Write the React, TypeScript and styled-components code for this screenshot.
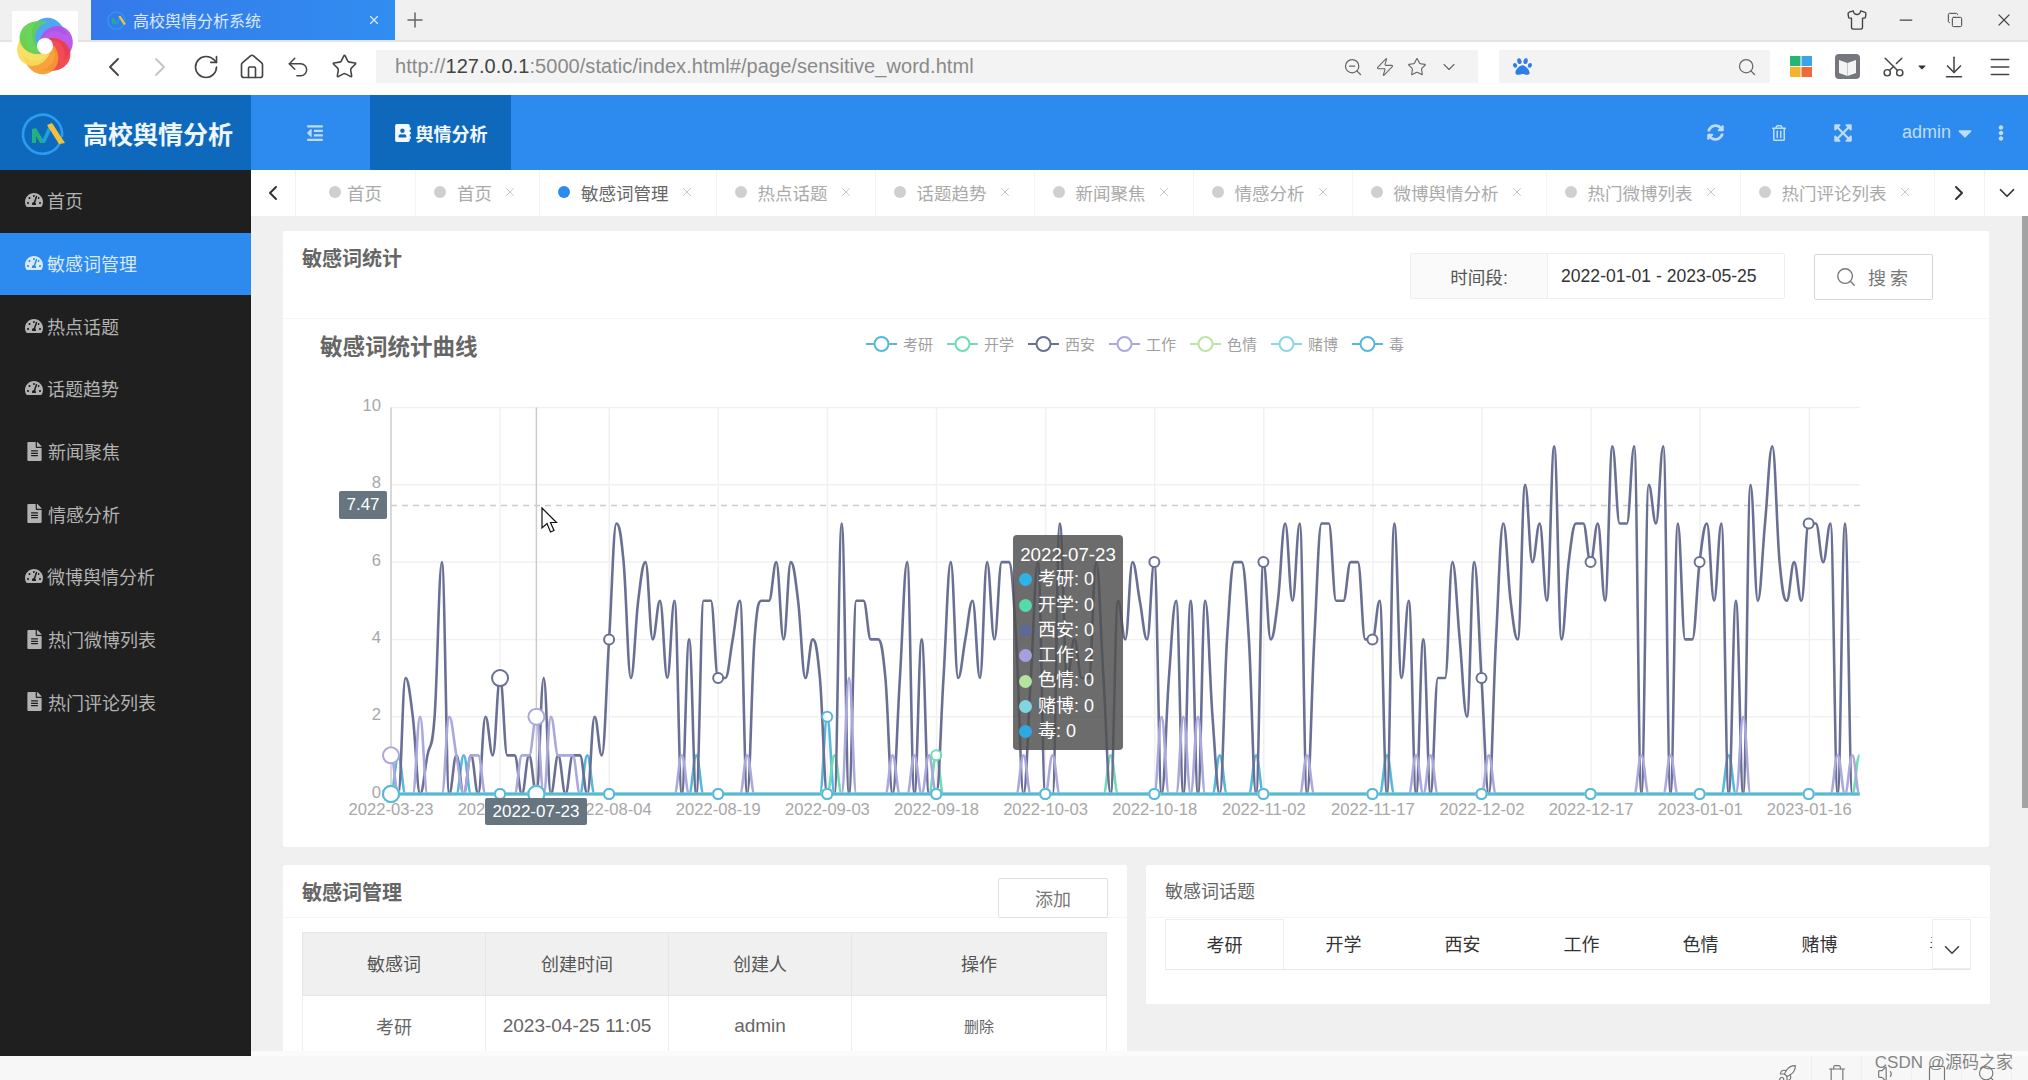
import React from 'react';
import styled, { createGlobalStyle } from 'styled-components';
import {
  ChevronLeft, ChevronRight, ChevronDown, RotateCw, Home, Undo2, Star, ZoomOut, Zap, Search, Scissors,
  ArrowDownToLine, Menu, Shirt, Minus, Copy, X, Plus, Rocket, Trash, Volume1, Square,
} from 'lucide-react';
import {
  FaTachometerAlt, FaFileAlt, FaSyncAlt, FaRegTrashAlt, FaExpandArrowsAlt, FaEllipsisV, FaCaretDown,
  FaOutdent, FaAddressBook, FaPaw,
} from 'react-icons/fa';

const Global = createGlobalStyle`
  html, body { margin: 0; padding: 0; background: #fff; }
  body { font-family: "Liberation Sans", "Noto Sans CJK SC", sans-serif; }
`;

const Page = styled.div`
  width: 2028px;
  height: 1080px;
  display: flex;
  flex-direction: column;
  overflow: hidden;
  position: relative;
`;

/* browser chrome */
const BrowserTabs = styled.div`
  height: 40px;
  background: #f0f0f0;
  display: flex;
  align-items: stretch;
  padding-left: 91px;
  flex: none;
`;
const BrowserTab = styled.div`
  width: 304px;
  background: linear-gradient(90deg, #3579ea, #318df0);
  color: #dce9fb;
  font-size: 16px;
  display: flex;
  align-items: center;
  padding: 0 14px 0 16px;
  gap: 6px;
  box-sizing: border-box;
`;
const TabTitle = styled.span`
  flex: 1;
`;
const NewTab = styled.div`
  width: 40px;
  display: flex;
  align-items: center;
  justify-content: center;
  color: #666;
`;
const WindowControls = styled.div`
  margin-left: auto;
  display: flex;
  align-items: center;
`;
const WindowButton = styled.div`
  width: 49px;
  display: flex;
  justify-content: center;
  color: #444;
`;
const SwirlBox = styled.div`
  position: absolute;
  left: 12px;
  top: 11px;
  width: 66px;
  height: 69px;
  background: #fff;
  display: flex;
  align-items: center;
  justify-content: center;
`;
const BrowserToolbar = styled.div`
  height: 55px;
  background: #fff;
  border-top: 2px solid #e4e4e4;
  box-sizing: border-box;
  display: flex;
  align-items: center;
  padding: 0 0 4px 91px;
  flex: none;
`;
const ToolButton = styled.div<{ $faint?: boolean }>`
  width: 46px;
  display: flex;
  justify-content: center;
  color: ${p => (p.$faint ? '#c4c4c4' : '#444')};
`;
const UprightScissors = styled(Scissors)`
  transform: rotate(-90deg);
`;
const AddressBar = styled.div`
  width: 1102px;
  height: 33px;
  margin-left: 9px;
  background: #f3f3f3;
  display: flex;
  align-items: center;
  padding: 0 13px 0 19px;
  box-sizing: border-box;
  font-size: 20px;
  letter-spacing: 0.06px;
  color: #8a8a8a;
`;
const Host = styled.span`
  color: #444;
`;
const AddressTools = styled.div`
  margin-left: auto;
  display: flex;
  color: #666;
`;
const AddressTool = styled.div`
  width: 32px;
  display: flex;
  justify-content: center;
`;
const SearchBox = styled.div`
  width: 271px;
  height: 33px;
  margin: 0 8px 0 21px;
  background: #f3f3f3;
  display: flex;
  align-items: center;
  justify-content: space-between;
  padding: 0 13px 0 14px;
  box-sizing: border-box;
  color: #666;
`;
const Paw = styled.div`
  color: #2f7de8;
  display: flex;
`;
const CaretCell = styled.div`
  width: 15px;
  display: flex;
  color: #333;
`;

/* app header */
const AppHeader = styled.header`
  height: 75px;
  background: #2d8aee;
  display: flex;
  align-items: stretch;
  flex: none;
  color: #c1dcf8;
`;
const Brand = styled.div`
  width: 251px;
  background: #0e68bb;
  display: flex;
  align-items: center;
  gap: 16px;
  padding-left: 21px;
  box-sizing: border-box;
  color: #eef6ff;
  font-size: 25px;
  font-weight: 700;
`;
const ToggleCell = styled.div`
  width: 119px;
  padding-left: 8px;
  box-sizing: border-box;
  display: flex;
  align-items: center;
  justify-content: center;
`;
const HeaderNav = styled.div`
  width: 141px;
  background: #0e68bb;
  display: flex;
  align-items: center;
  justify-content: center;
  gap: 4px;
  color: #f2f8ff;
  font-size: 18px;
  font-weight: 700;
`;
const HeaderTools = styled.div`
  margin-left: auto;
  display: flex;
  align-items: center;
  padding-right: 19px;
`;
const HeaderTool = styled.div`
  width: 64px;
  display: flex;
  justify-content: center;
`;
const AdminMenu = styled.div`
  margin-left: 27px;
  display: flex;
  align-items: center;
  gap: 3px;
  font-size: 18px;
  width: 91px;
`;

/* body */
const Main = styled.div`
  flex: 1;
  display: flex;
  min-height: 0;
`;
const Sidebar = styled.nav`
  width: 251px;
  flex: none;
  background: #1f1f1f;
  box-sizing: border-box;
`;
const SideItem = styled.div<{ $active?: boolean }>`
  height: 62.7px;
  padding: 0 0 2px 25px;
  box-sizing: border-box;
  display: flex;
  align-items: center;
  gap: 4px;
  font-size: 18px;
  color: ${p => (p.$active ? '#d8e9fd' : '#b2b2b2')};
  background: ${p => (p.$active ? '#2d8aee' : 'transparent')};
`;
const Workspace = styled.div`
  flex: 1;
  min-width: 0;
  display: flex;
  flex-direction: column;
`;
const TabBar = styled.div`
  height: 46px;
  background: #fff;
  display: flex;
  flex: none;
  color: #aaa;
`;
const TabArrow = styled.div<{ $w: number; $border?: boolean }>`
  width: ${p => p.$w}px;
  display: flex;
  align-items: center;
  justify-content: center;
  color: #333;
  border-right: ${p => (p.$border ? '1px solid #f2f2f2' : 'none')};
  box-sizing: border-box;
  flex: none;
`;
const PageTab = styled.div<{ $plain?: boolean }>`
  flex: none;
  display: flex;
  align-items: center;
  padding: 0 ${p => (p.$plain ? 33 : 18)}px 2px ${p => (p.$plain ? 33 : 18)}px;
  border-right: 1px solid #f4f4f4;
  box-sizing: border-box;
  font-size: 17.5px;
`;
const PageTabLabel = styled.span<{ $active?: boolean; $plain?: boolean }>`
  margin-left: ${p => (p.$plain ? 6 : 11)}px;
  color: ${p => (p.$active ? '#666' : '#aaa')};
`;
const Dot = styled.i<{ $active?: boolean }>`
  width: 12px;
  height: 12px;
  border-radius: 50%;
  background: ${p => (p.$active ? '#2d8aee' : '#cfcfcf')};
`;
const TabClose = styled.span`
  margin-left: 11px;
  width: 18px;
  display: flex;
  color: #bbb;
`;
const ContentRow = styled.div`
  flex: 1;
  display: flex;
  min-height: 0;
  background: #f0f0f0;
  border-bottom: 5px solid #fbfbfb;
`;
const Content = styled.div`
  flex: 1;
  min-width: 0;
  overflow: hidden;
  padding: 15px 33px 0 32px;
`;
const ScrollTrack = styled.div`
  width: 6px;
  flex: none;
`;
const ScrollThumb = styled.div`
  height: 592px;
  background: #a3a3a3;
`;
const Card = styled.section`
  background: #fff;
  border-radius: 2px;
`;
const StatCard = styled(Card)`
  height: 616px;
`;
const CardHead = styled.div<{ $h: number }>`
  height: ${p => p.$h}px;
  box-sizing: border-box;
  border-bottom: 1px solid #f5f5f5;
  display: flex;
  justify-content: space-between;
  padding-left: 19px;
`;
const CardTitle = styled.h3<{ $light?: boolean }>`
  margin: 0;
  font-size: ${p => (p.$light ? 18 : 20)}px;
  line-height: 24px;
  font-weight: ${p => (p.$light ? 400 : 700)};
  color: #666;
  padding-top: ${p => (p.$light ? 15 : 16)}px;
`;
const Filters = styled.div`
  display: flex;
  padding: 22px 56px 0 0;
  gap: 29px;
  align-items: flex-start;
`;
const DateField = styled.div`
  width: 375px;
  height: 46px;
  border: 1px solid #eee;
  box-sizing: border-box;
  display: flex;
  font-size: 17.6px;
  border-radius: 2px;
`;
const DateLabel = styled.div`
  width: 136px;
  background: #fafafa;
  border-right: 1px solid #eee;
  color: #555;
  display: flex;
  align-items: center;
  justify-content: center;
`;
const DateValue = styled.div`
  flex: 1;
  color: #333;
  display: flex;
  align-items: center;
  padding-left: 13px;
`;
const SearchButton = styled.div`
  width: 119px;
  height: 46px;
  margin-top: 1px;
  border: 1px solid #d6d6d6;
  box-sizing: border-box;
  border-radius: 2px;
  display: flex;
  align-items: center;
  justify-content: center;
  gap: 11px;
  color: #777;
  font-size: 18px;
  letter-spacing: 4px;
`;
const ChartHead = styled.div`
  height: 51px;
  display: flex;
  align-items: center;
  padding-left: 37px;
`;
const ChartTitle = styled.h2`
  margin: 0;
  width: 158px;
  font-size: 22.5px;
  font-weight: 700;
  color: #666;
`;
const Legend = styled.div`
  display: flex;
  margin: -2px 0 0 388px;
  gap: 14px;
`;
const LegendItem = styled.div`
  display: flex;
  align-items: center;
  gap: 6px;
  font-size: 15px;
  color: #a0a0a0;
`;
const ChartBody = styled.div`
  position: relative;
  height: 477px;
  svg { display: block; }
`;
const AxisPointer = styled.div`
  position: absolute;
  background: #66757f;
  color: #fff;
  font-size: 17px;
  display: flex;
  align-items: center;
  justify-content: center;
  border-radius: 2px;
`;
const Tooltip = styled.div`
  position: absolute;
  left: 730px;
  top: 165px;
  width: 110px;
  height: 215px;
  background: rgba(80, 80, 80, 0.84);
  border-radius: 4px;
  box-sizing: border-box;
  padding-top: 7px;
  color: #fff;
  font-size: 18px;
  line-height: 25.3px;
`;
const TooltipDate = styled.div`
  text-align: center;
  font-size: 18.7px;
`;
const TooltipRow = styled.div`
  display: flex;
  align-items: center;
  padding-left: 6px;
  gap: 6px;
`;
const TooltipDot = styled.i<{ $color: string }>`
  width: 13px;
  height: 13px;
  border-radius: 50%;
  background: ${p => p.$color};
`;
const BottomRow = styled.div`
  display: flex;
  gap: 19px;
  margin-top: 18px;
  align-items: flex-start;
`;
const ManageCard = styled(Card)`
  width: 844px;
  flex: none;
`;
const TopicCard = styled(Card)`
  width: 844px;
  height: 139px;
  flex: none;
`;
const AddButton = styled.div`
  width: 110px;
  height: 40px;
  margin: 13px 19px 0 0;
  border: 1px solid #e2e2e2;
  border-radius: 2px;
  box-sizing: border-box;
  display: flex;
  align-items: center;
  justify-content: center;
  color: #777;
  font-size: 18px;
`;
const TableWrap = styled.div`
  padding: 14px 19px 0;
`;
const Table = styled.table`
  width: 805px;
  border-collapse: collapse;
  table-layout: fixed;
  font-size: 18px;
`;
const Th = styled.th<{ $w?: number }>`
  height: 63px;
  padding: 0 0 3px;
  box-sizing: border-box;
  background: #f0f0f0;
  border: 1px solid #e6e6e6;
  font-weight: 400;
  color: #555;
  width: ${p => (p.$w ? `${p.$w}px` : 'auto')};
`;
const Td = styled.td<{ $size?: number }>`
  height: 63px;
  padding: 0 0 3px;
  box-sizing: border-box;
  border: 1px solid #eee;
  text-align: center;
  color: #666;
  font-size: ${p => p.$size || 18}px;
`;
const TopicTabs = styled.div`
  margin: 1px 19px 0;
  height: 50px;
  border-bottom: 1px solid #e6e6e6;
  display: flex;
  position: relative;
  overflow: hidden;
  font-size: 18px;
  color: #333;
`;
const TopicTab = styled.div<{ $active?: boolean }>`
  width: 119px;
  flex: none;
  display: flex;
  align-items: center;
  justify-content: center;
  box-sizing: border-box;
  padding-bottom: 2px;
  border: ${p => (p.$active ? '1px solid #eee' : 'none')};
  border-bottom: none;
`;
const TopicMore = styled.div`
  position: absolute;
  right: 0;
  top: 0;
  bottom: 0;
  width: 39px;
  background: #fff;
  border: 1px solid #eee;
  box-sizing: border-box;
  display: flex;
  justify-content: center;
  padding-top: 17px;
  color: #444;
`;
const StatusBar = styled.footer`
  height: 24px;
  flex: none;
  background: #f7f7f7;
  display: flex;
  justify-content: flex-end;
  padding-right: 16px;
  overflow: hidden;
  color: #777;
`;
const StatusCell = styled.div`
  width: 50px;
  display: flex;
  justify-content: center;
  padding-top: 8px;
  border-right: 1px solid #efefef;
  box-sizing: border-box;
`;
const Watermark = styled.div`
  position: absolute;
  right: 15px;
  top: 1048px;
  font-size: 17px;
  color: rgba(110, 110, 110, 0.85);
`;

/* drawings */
const Swirl = () => {
  const colors = ['#3f9ff2', '#b54fe6', '#ee3d45', '#f59a2c', '#f7dc5a', '#5fd04f'];
  return (
    <svg width="58" height="58" viewBox="-29 -29 58 58">
      <defs>
        <filter id="soft">
          <feGaussianBlur stdDeviation="0.5" />
        </filter>
      </defs>
      <g filter="url(#soft)">
        {colors.map((c, i) => (
          <path
            key={c}
            transform={`rotate(${i * 60 - 40})`}
            d="M-7 -5C-7 -19 7 -29 19 -21C27 -15 28 -4 23 7C22 -3 14 -10 6 -8C2 -7 -3 -7 -7 -5Z"
            fill={c}
            opacity="0.92"
          />
        ))}
        <circle r="8" fill="#fff" />
      </g>
    </svg>
  );
};

const MiniLogo = ({ size }: { size: number }) => (
  <svg width={size} height={size} viewBox="0 0 46 46" style={{ flex: 'none' }}>
    <path d="M39 33A19.5 19.5 0 1 1 41 26" fill="none" stroke="#2c9cf0" strokeWidth="2.6" strokeLinecap="round" />
    <path d="M11 33V19L15 18L24 33H19L15 26V33Z" fill="#24b080" />
    <path d="M21 31L28 15L30 20L24 33Z" fill="#1d9fe0" />
    <path d="M26 15L31 13L44 33L38 34Z" fill="#f0c23c" />
  </svg>
);

const CHART_LEFT = 391;
const CHART_RIGHT = 1860;
const Y_ZERO = 794;
const UNIT = 38.65;
const STEP = 7.27;

const xian = (
  '0032012601' + '0102131101' + '0301011021' + '4763564535' + '0405533450' + '4556465343' + '0070554430' +
  '3604003634' + '5364664036' + '0073433630' + '5465460350' + '5052046640' + '6457570477' + '5566445073' +
  '5040336426' + '3047548675' + '9467767597' + '7908790744' + '6757050857' + '9656577670' + '700'
)
  .split('')
  .map(Number);

const sparse = (points: Record<number, number>) => xian.map((_, i) => points[i] || 0);

const series = [
  { name: '考研', color: '#56b9dc', value: 0, data: sparse({ 1: 1, 10: 1, 27: 1, 42: 1, 60: 2, 114: 1, 119: 1, 137: 1, 184: 1 }) },
  { name: '开学', color: '#6fdcb4', value: 0, data: sparse({ 61: 1, 75: 1, 99: 1, 202: 1 }) },
  { name: '西安', color: '#6a7094', value: 0, data: xian },
  {
    name: '工作',
    color: '#aba8de',
    value: 2,
    data: sparse({
      0: 1, 4: 2, 8: 2, 9: 1, 11: 1, 12: 1, 18: 1, 19: 1, 20: 2, 22: 2, 23: 1, 24: 1, 25: 1, 40: 1, 49: 1, 63: 3,
      69: 1, 72: 1, 74: 1, 87: 1, 91: 1, 106: 2, 109: 2, 111: 2, 126: 1, 141: 1, 143: 1, 151: 1, 172: 1, 176: 1,
      186: 2, 199: 1, 201: 1,
    }),
  },
  { name: '色情', color: '#bde3a6', value: 0, data: sparse({}) },
  { name: '赌博', color: '#8ad9e2', value: 0, data: sparse({}) },
  { name: '毒', color: '#56b9dc', value: 0, data: sparse({}) },
];

const tooltipColors = ['#2db3e6', '#58d9a9', '#5d6a96', '#a5a1e0', '#b5e3a0', '#7fd6e0', '#2ea8e0'];

const xLabels = [
  '2022-03-23', '2022-07-20', '2022-08-04', '2022-08-19', '2022-09-03', '2022-09-18', '2022-10-03', '2022-10-18',
  '2022-11-02', '2022-11-17', '2022-12-02', '2022-12-17', '2023-01-01', '2023-01-16',
];

const px = (i: number) => CHART_LEFT + i * STEP;
const py = (v: number) => Y_ZERO - v * UNIT;

// smooth line: flat tangent at every peak and valley so the curve stays in range
const smoothPath = (data: number[]) => {
  const slope = (i: number) => {
    const a = data[Math.max(i - 1, 0)];
    const b = data[i];
    const c = data[Math.min(i + 1, data.length - 1)];
    if ((b - a) * (c - b) <= 0) return 0;
    return (c - a) / 2;
  };
  let d = `M${px(0)} ${py(data[0])}`;
  for (let i = 0; i < data.length - 1; i++) {
    const c1y = data[i] + slope(i) * 0.4;
    const c2y = data[i + 1] - slope(i + 1) * 0.4;
    d += `C${px(i + 0.4).toFixed(1)} ${py(c1y).toFixed(1)} ${px(i + 0.6).toFixed(1)} ${py(c2y).toFixed(1)} ${px(i + 1).toFixed(1)} ${py(data[i + 1]).toFixed(1)}`;
  }
  return d;
};

const LegendSymbol = ({ color }: { color: string }) => (
  <svg width="31" height="18" viewBox="0 0 31 18">
    <path d="M0 9H31" stroke={color} strokeWidth="2" />
    <circle cx="15.5" cy="9" r="7" fill="#fff" stroke={color} strokeWidth="2" />
  </svg>
);

const StatChart = () => (
  <svg width="1706" height="477" viewBox="283 370 1706 477">
    <defs>
      <clipPath id="plot">
        <rect x={CHART_LEFT - 12} y="380" width={CHART_RIGHT - CHART_LEFT + 12} height="430" />
      </clipPath>
    </defs>
    {[0, 2, 4, 6, 8, 10].map(v => (
      <g key={v}>
        <path d={`M${CHART_LEFT} ${py(v)}H${CHART_RIGHT}`} stroke="#f1f1f3" strokeWidth="1.5" />
        <text x={CHART_LEFT - 10} y={py(v) + 3.5} textAnchor="end" fontSize="16.6" fill="#a8a8a8">
          {v}
        </text>
      </g>
    ))}
    {xLabels.map((label, i) => (
      <g key={label}>
        <path d={`M${CHART_LEFT + i * 109.1} ${py(10)}V${Y_ZERO}`} stroke="#f1f1f3" strokeWidth="1.5" />
        <text x={CHART_LEFT + i * 109.1} y="815" textAnchor="middle" fontSize="16.6" fill="#a8a8a8">
          {label}
        </text>
      </g>
    ))}
    <path d={`M${CHART_LEFT} ${py(10)}V${Y_ZERO}`} stroke="#d8d8d8" strokeWidth="2" />
    <path d={`M${CHART_LEFT} 505.5H${CHART_RIGHT}`} stroke="#ccc" strokeWidth="1.5" strokeDasharray="6 5" />
    <path d={`M${px(20)} ${py(10)}V${Y_ZERO}`} stroke="#ccc" strokeWidth="1.5" />
    <g clipPath="url(#plot)">
      {series.map(s => (
        <path key={s.name} d={smoothPath(s.data)} fill="none" stroke={s.color} strokeWidth="2.6" />
      ))}
      {series.map(s =>
        s.data.map((v, i) => {
          if (i % 15 !== 0 && i !== 20) return null;
          const large = i === 0 || i === 20 || (i === 15 && s.name === '西安');
          return <circle key={i} cx={px(i)} cy={py(v)} r={large ? 8 : 5} fill="#fff" stroke={s.color} strokeWidth="2" />;
        }),
      )}
    </g>
    <path
      d="M542 508V528L547 523.5L550.5 532L554 530.5L550.5 522.5H556.5Z"
      fill="#fff"
      stroke="#111"
      strokeWidth="1.2"
    />
  </svg>
);

const tabs = [
  { label: '首页', plain: true },
  { label: '首页' },
  { label: '敏感词管理', active: true },
  { label: '热点话题' },
  { label: '话题趋势' },
  { label: '新闻聚焦' },
  { label: '情感分析' },
  { label: '微博舆情分析' },
  { label: '热门微博列表' },
  { label: '热门评论列表' },
];

const menu = [
  { label: '首页', file: false },
  { label: '敏感词管理', file: false, active: true },
  { label: '热点话题', file: false },
  { label: '话题趋势', file: false },
  { label: '新闻聚焦', file: true },
  { label: '情感分析', file: true },
  { label: '微博舆情分析', file: false },
  { label: '热门微博列表', file: true },
  { label: '热门评论列表', file: true },
];

const App = () => (
  <Page>
    <Global />
    <BrowserTabs>
      <BrowserTab>
        <MiniLogo size={20} />
        <TabTitle>高校舆情分析系统</TabTitle>
        <X size={14} />
      </BrowserTab>
      <NewTab>
        <Plus size={24} strokeWidth={1.5} />
      </NewTab>
      <WindowControls>
        <WindowButton><Shirt size={22} strokeWidth={1.5} /></WindowButton>
        <WindowButton><Minus size={20} strokeWidth={1.5} /></WindowButton>
        <WindowButton><Copy size={16} strokeWidth={1.5} /></WindowButton>
        <WindowButton><X size={20} strokeWidth={1.3} /></WindowButton>
      </WindowControls>
    </BrowserTabs>
    <BrowserToolbar>
      <ToolButton><ChevronLeft size={32} strokeWidth={1.4} /></ToolButton>
      <ToolButton $faint><ChevronRight size={32} strokeWidth={1.4} /></ToolButton>
      <ToolButton><RotateCw size={28} strokeWidth={1.4} /></ToolButton>
      <ToolButton><Home size={28} strokeWidth={1.4} /></ToolButton>
      <ToolButton><Undo2 size={26} strokeWidth={1.4} /></ToolButton>
      <ToolButton><Star size={27} strokeWidth={1.4} /></ToolButton>
      <AddressBar>
        http://<Host>127.0.0.1</Host>:5000/static/index.html#/page/sensitive_word.html
        <AddressTools>
          <AddressTool><ZoomOut size={20} strokeWidth={1.5} /></AddressTool>
          <AddressTool><Zap size={20} strokeWidth={1.3} /></AddressTool>
          <AddressTool><Star size={20} strokeWidth={1.4} /></AddressTool>
          <AddressTool><ChevronDown size={20} strokeWidth={1.3} /></AddressTool>
        </AddressTools>
      </AddressBar>
      <SearchBox>
        <Paw><FaPaw size={19} /></Paw>
        <Search size={20} strokeWidth={1.5} />
      </SearchBox>
      <ToolButton>
        <svg width="22" height="21" viewBox="0 0 22 21">
          <rect x="0" y="0" width="10.5" height="10" fill="#25b574" />
          <rect x="11.5" y="0" width="10.5" height="10" fill="#3aa5e8" />
          <rect x="0" y="11" width="10.5" height="10" fill="#f6b32c" />
          <rect x="11.5" y="11" width="10.5" height="10" fill="#ee6a3c" />
        </svg>
      </ToolButton>
      <ToolButton>
        <svg width="25" height="25" viewBox="0 0 25 25">
          <rect width="25" height="25" rx="4" fill="#74777c" />
          <path d="M4 6L12.5 9L21 6V19L12.5 22L4 19Z" fill="#f4f4f4" />
          <path d="M12.5 9V22" stroke="#c8c8c8" strokeWidth="1" />
        </svg>
      </ToolButton>
      <ToolButton><UprightScissors size={25} strokeWidth={1.4} /></ToolButton>
      <CaretCell><FaCaretDown size={12} /></CaretCell>
      <ToolButton><ArrowDownToLine size={26} strokeWidth={1.4} /></ToolButton>
      <ToolButton><Menu size={26} strokeWidth={1.4} /></ToolButton>
    </BrowserToolbar>
    <SwirlBox><Swirl /></SwirlBox>
    <AppHeader>
      <Brand>
        <MiniLogo size={46} />
        高校舆情分析
      </Brand>
      <ToggleCell><FaOutdent size={18} /></ToggleCell>
      <HeaderNav>
        <FaAddressBook size={18} />
        舆情分析
      </HeaderNav>
      <HeaderTools>
        <HeaderTool><FaSyncAlt size={17} /></HeaderTool>
        <HeaderTool><FaRegTrashAlt size={16} /></HeaderTool>
        <HeaderTool><FaExpandArrowsAlt size={20} /></HeaderTool>
        <AdminMenu>
          admin
          <FaCaretDown size={22} />
        </AdminMenu>
        <FaEllipsisV size={16} />
      </HeaderTools>
    </AppHeader>
    <Main>
      <Sidebar>
        {menu.map(item => (
          <SideItem key={item.label} $active={item.active}>
            {item.file ? <FaFileAlt size={19} /> : <FaTachometerAlt size={18} />}
            {item.label}
          </SideItem>
        ))}
      </Sidebar>
      <Workspace>
        <TabBar>
          <TabArrow $w={45} $border><ChevronLeft size={24} strokeWidth={2} /></TabArrow>
          {tabs.map((tab, i) => (
            <PageTab key={i} $plain={tab.plain}>
              <Dot $active={tab.active} />
              <PageTabLabel $active={tab.active} $plain={tab.plain}>{tab.label}</PageTabLabel>
              {!tab.plain && <TabClose><X size={14} strokeWidth={1.5} /></TabClose>}
            </PageTab>
          ))}
          <TabArrow $w={50} $border><ChevronRight size={24} strokeWidth={2} /></TabArrow>
          <TabArrow $w={45}><ChevronDown size={26} strokeWidth={1.6} /></TabArrow>
        </TabBar>
        <ContentRow>
          <Content>
            <StatCard>
              <CardHead $h={88}>
                <CardTitle>敏感词统计</CardTitle>
                <Filters>
                  <DateField>
                    <DateLabel>时间段:</DateLabel>
                    <DateValue>2022-01-01 - 2023-05-25</DateValue>
                  </DateField>
                  <SearchButton>
                    <Search size={22} strokeWidth={1.5} />
                    搜索
                  </SearchButton>
                </Filters>
              </CardHead>
              <ChartHead>
                <ChartTitle>敏感词统计曲线</ChartTitle>
                <Legend>
                  {series.map(s => (
                    <LegendItem key={s.name}>
                      <LegendSymbol color={s.color} />
                      {s.name}
                    </LegendItem>
                  ))}
                </Legend>
              </ChartHead>
              <ChartBody>
                <StatChart />
                <AxisPointer style={{ left: 56, top: 121, width: 48, height: 28 }}>7.47</AxisPointer>
                <AxisPointer style={{ left: 202, top: 428, width: 102, height: 27 }}>2022-07-23</AxisPointer>
                <Tooltip>
                  <TooltipDate>2022-07-23</TooltipDate>
                  {series.map((s, i) => (
                    <TooltipRow key={s.name}>
                      <TooltipDot $color={tooltipColors[i]} />
                      {s.name}: {s.value}
                    </TooltipRow>
                  ))}
                </Tooltip>
              </ChartBody>
            </StatCard>
            <BottomRow>
              <ManageCard>
                <CardHead $h={53}>
                  <CardTitle>敏感词管理</CardTitle>
                  <AddButton>添加</AddButton>
                </CardHead>
                <TableWrap>
                  <Table>
                    <thead>
                      <tr>
                        <Th $w={183}>敏感词</Th>
                        <Th $w={183}>创建时间</Th>
                        <Th $w={183}>创建人</Th>
                        <Th>操作</Th>
                      </tr>
                    </thead>
                    <tbody>
                      <tr>
                        <Td>考研</Td>
                        <Td $size={19}>2023-04-25 11:05</Td>
                        <Td $size={19}>admin</Td>
                        <Td $size={15}>删除</Td>
                      </tr>
                    </tbody>
                  </Table>
                </TableWrap>
              </ManageCard>
              <TopicCard>
                <CardHead $h={53}>
                  <CardTitle $light>敏感词话题</CardTitle>
                </CardHead>
                <TopicTabs>
                  {series.map((s, i) => (
                    <TopicTab key={s.name} $active={i === 0}>{s.name}</TopicTab>
                  ))}
                  <TopicMore><ChevronDown size={26} strokeWidth={1.5} /></TopicMore>
                </TopicTabs>
              </TopicCard>
            </BottomRow>
          </Content>
          <ScrollTrack><ScrollThumb /></ScrollTrack>
        </ContentRow>
      </Workspace>
    </Main>
    <StatusBar>
      <StatusCell><Rocket size={20} strokeWidth={1.4} /></StatusCell>
      <StatusCell><Trash size={20} strokeWidth={1.4} /></StatusCell>
      <StatusCell><Volume1 size={20} strokeWidth={1.4} /></StatusCell>
      <StatusCell><Square size={20} strokeWidth={1.4} /></StatusCell>
      <StatusCell><Search size={20} strokeWidth={1.4} /></StatusCell>
    </StatusBar>
    <Watermark>CSDN @源码之家</Watermark>
  </Page>
);

export default App;
